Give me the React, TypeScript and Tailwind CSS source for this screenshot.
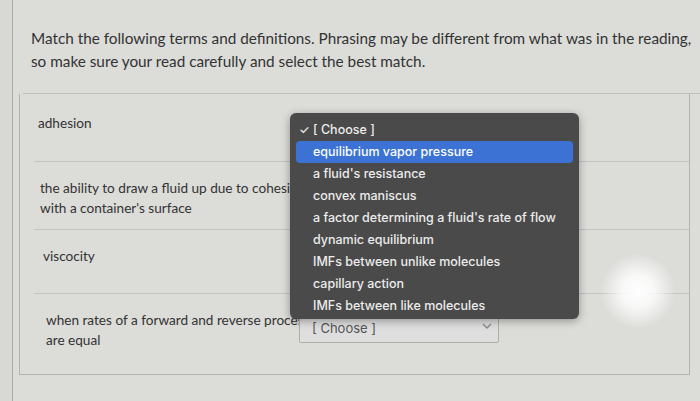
import React from 'react';

const options = [
  'equilibrium vapor pressure',
  "a fluid's resistance",
  'convex maniscus',
  "a factor determining a fluid's rate of flow",
  'dynamic equilibrium',
  'IMFs between unlike molecules',
  'capillary action',
  'IMFs between like molecules',
];

const rows = [
  { label: ['adhesion'], h: 'h-[67px]', pt: 'pt-[19px]', pl: 'pl-[18px]' },
  { label: ['the ability to draw a fluid up due to cohesio', "with a container's surface"], h: 'h-[68px]', pt: 'pt-[16px]', pl: 'pl-[6px]' },
  { label: ['viscocity'], h: 'h-[64px]', pt: 'pt-[16px]', pl: 'pl-[9px]' },
  { label: ['when rates of a forward and reverse process', 'are equal'], h: 'h-[81px]', pt: 'pt-[16px]', pl: 'pl-[12px]' },
];

const App: React.FC = () => {
  return (
    <div className="relative w-[700px] h-[401px] overflow-hidden bg-[#d8d8d5] font-['Lato','Liberation_Sans',sans-serif] text-[#3a3a3a]">
      {/* page edge */}
      <div className="ml-[12px] h-full border-l border-[#a9a9a6] bg-[#dcdcd9]">
        {/* prompt */}
        <div className="pl-[18px] pt-[27px] text-[15.3px] leading-[23px] text-[#333] whitespace-nowrap">
          <p>Match the following terms and definitions. Phrasing may be different from what was in the reading,</p>
          <p>so make sure your read carefully and select the best match.</p>
        </div>
        <div className="mt-[20px] ml-[10px] border-t border-[#bdbdba]" />

        {/* answer rows */}
        <div className="ml-[6px] mr-[10px] border-l border-b border-r border-[#b3b3b0]">
          {rows.map((r, i) => (
            <div key={i} className={`${r.h} ${i > 0 ? 'ml-[14px] border-t border-[#c3c3c0]' : ''}`}>
              <div className={`${r.pl} ${r.pt} text-[13.6px] leading-[20px] text-[#333] whitespace-nowrap`}>
                {r.label.map((l, j) => (
                  <div key={j}>{l}</div>
                ))}
              </div>
            </div>
          ))}
        </div>
      </div>

      {/* lower select */}
      <div className="absolute left-[299px] top-[315px] w-[200px] h-[28px] border border-[#aeaeab] rounded-[2px] bg-[#dedede] flex items-center justify-between pl-[12px] pr-[6px] font-['Inter','Liberation_Sans',sans-serif] text-[13px] text-[#555]">
        <span>[ Choose ]</span>
        <svg width="10" height="6" viewBox="0 0 10 6" className="mt-[-6px]">
          <path d="M1 1 L5 5 L9 1" fill="none" stroke="#8a8a8a" strokeWidth="1.3" />
        </svg>
      </div>

      {/* open dropdown menu */}
      <div className="absolute left-[290px] top-[113px] w-[289px] h-[206px] rounded-[6px] bg-[#4a4a4a] shadow-[0_2px_8px_rgba(0,0,0,0.35)] pt-[6px] px-[6px] font-['Inter','Liberation_Sans',sans-serif] text-[12.5px] font-medium text-[#ececec]">
        <div className="h-[22px] flex items-center pl-[3px]">
          <span className="w-[14px] text-[12px]">✓</span>
          <span>[ Choose ]</span>
        </div>
        {options.map((o, i) => (
          <div
            key={o}
            className={`h-[22px] flex items-center pl-[17px] ${i === 0 ? 'bg-[#3b72d3] rounded-[4px] text-white' : ''}`}
          >
            {o}
          </div>
        ))}
      </div>

      {/* screen glare */}
      <div className="absolute left-[598px] top-[255px] w-[80px] h-[72px] rounded-full bg-[radial-gradient(circle,rgba(255,255,255,1)_0%,rgba(255,255,255,0.8)_30%,rgba(255,255,255,0)_70%)]" />
    </div>
  );
};

export default App;
